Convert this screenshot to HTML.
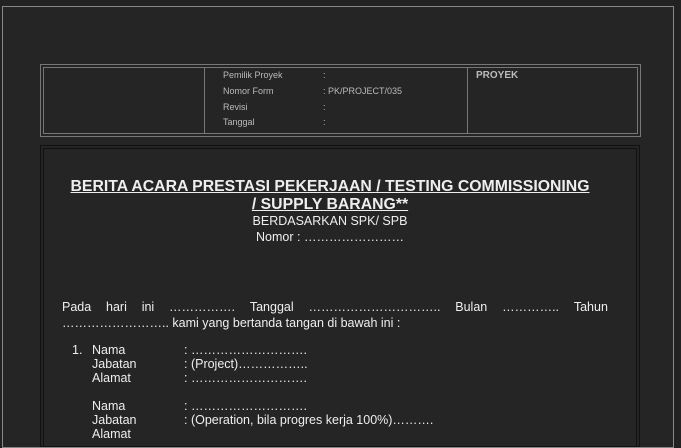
<!DOCTYPE html>
<html><head><meta charset="utf-8"><style>
body{margin:0;width:681px;height:434px;overflow:hidden;background:#222;font-family:"Liberation Sans",sans-serif;color:#ddd;position:relative}
.frame{position:absolute;left:2px;top:6px;width:670px;height:440px;border:1px solid #888;background:#252525}
.hdr{position:absolute;left:40px;top:64px;width:599px;height:71px;border:1px solid #777;}
.hdr .in{position:absolute;left:2px;top:2px;right:2px;bottom:2px;border:1px solid #777}
.v{position:absolute;top:0;bottom:0;border-left:1px solid #777}
.s{position:absolute;font-size:9px;color:#bbb}
.box{position:absolute;left:40px;top:145px;width:598px;height:300px;border:1px solid #111;}
.box .in{position:absolute;left:2px;top:2px;right:2px;bottom:0;border:1px solid #111;border-bottom:none}
.t{position:absolute;font-size:12.5px;color:#eee;white-space:nowrap}
.c{left:0;width:660px;text-align:center}
</style></head><body>
<div class="frame"></div>
<div class="hdr"><div class="in">
<div class="v" style="left:160px"></div><div class="v" style="left:423px"></div>
</div></div>
<div class="s" style="left:223px;top:70px">Pemilik Proyek</div><div class="s" style="left:323px;top:70px">:</div>
<div class="s" style="left:223px;top:86px">Nomor Form</div><div class="s" style="left:323px;top:86px">: PK/PROJECT/035</div>
<div class="s" style="left:223px;top:102px">Revisi</div><div class="s" style="left:323px;top:102px">:</div>
<div class="s" style="left:223px;top:117px">Tanggal</div><div class="s" style="left:323px;top:117px">:</div>
<div class="s" style="left:476px;top:70px;font-size:10px;font-weight:bold">PROYEK</div>
<div class="box"><div class="in"></div></div>
<div class="t c" style="top:178px;font-size:15.8px;font-weight:bold;text-decoration:underline">BERITA ACARA PRESTASI PEKERJAAN / TESTING COMMISSIONING</div>
<div class="t c" style="top:196px;font-size:15.8px;font-weight:bold;text-decoration:underline">/ SUPPLY BARANG**</div>
<div class="t c" style="top:214px;font-size:12.5px">BERDASARKAN SPK/ SPB</div>
<div class="t c" style="top:230px;font-size:12.5px">Nomor : ……………………</div>
<div class="t" style="left:62px;top:300px;width:546px;display:flex;justify-content:space-between"><span>Pada</span><span>hari</span><span>ini</span><span>…………….</span><span>Tanggal</span><span>…………………………..</span><span>Bulan</span><span>…………..</span><span>Tahun</span></div>
<div class="t" style="left:62px;top:316px">…………………….. kami yang bertanda tangan di bawah ini :</div>
<div class="t" style="left:72px;top:343px">1.</div>
<div class="t" style="left:92px;top:343px">Nama</div><div class="t" style="left:184px;top:343px">: ……………………….</div>
<div class="t" style="left:92px;top:357px">Jabatan</div><div class="t" style="left:184px;top:357px">: (Project)……………..</div>
<div class="t" style="left:92px;top:371px">Alamat</div><div class="t" style="left:184px;top:371px">: ……………………….</div>
<div class="t" style="left:92px;top:399px">Nama</div><div class="t" style="left:184px;top:399px">: ……………………….</div>
<div class="t" style="left:92px;top:413px">Jabatan</div><div class="t" style="left:184px;top:413px">: (Operation, bila progres kerja 100%)……….</div>
<div class="t" style="left:92px;top:427px">Alamat</div>
</body></html>
